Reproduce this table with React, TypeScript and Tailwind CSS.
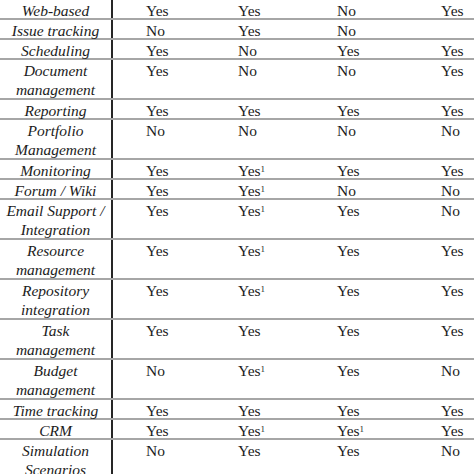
type Cell = string;

const rows: { label: string[]; values: Cell[] }[] = [
  { label: ["Web-based"], values: ["Yes", "Yes", "No", "Yes"] },
  { label: ["Issue tracking"], values: ["No", "Yes", "No", ""] },
  { label: ["Scheduling"], values: ["Yes", "No", "Yes", "Yes"] },
  { label: ["Document", "management"], values: ["Yes", "No", "No", "Yes"] },
  { label: ["Reporting"], values: ["Yes", "Yes", "Yes", "Yes"] },
  { label: ["Portfolio", "Management"], values: ["No", "No", "No", "No"] },
  { label: ["Monitoring"], values: ["Yes", "Yes1", "Yes", "Yes"] },
  { label: ["Forum / Wiki"], values: ["Yes", "Yes1", "No", "No"] },
  { label: ["Email Support /", "Integration"], values: ["Yes", "Yes1", "Yes", "No"] },
  { label: ["Resource", "management"], values: ["Yes", "Yes1", "Yes", "Yes"] },
  { label: ["Repository", "integration"], values: ["Yes", "Yes1", "Yes", "Yes"] },
  { label: ["Task", "management"], values: ["Yes", "Yes", "Yes", "Yes"] },
  { label: ["Budget", "management"], values: ["No", "Yes1", "Yes", "No"] },
  { label: ["Time tracking"], values: ["Yes", "Yes", "Yes", "Yes"] },
  { label: ["CRM"], values: ["Yes", "Yes1", "Yes1", "Yes"] },
  { label: ["Simulation", "Scenarios"], values: ["No", "Yes", "Yes", "No"] },
];

const serif = { fontFamily: "'Liberation Serif', 'Times New Roman', serif" };

function Value({ v }: { v: Cell }) {
  if (v.endsWith("1")) {
    return (
      <span className="inline-flex items-start" style={serif}>
        {v.slice(0, -1)}
        <span className="text-[9px] leading-[12px] pt-[2px]">1</span>
      </span>
    );
  }
  return <span style={serif}>{v}</span>;
}

export default function App() {
  return (
    <div className="w-[474px] h-[474px] overflow-hidden bg-white text-[#1c1c1c]" style={serif}>
      {rows.map((row, i) => (
        <div
          key={i}
          className={`flex border-b-2 border-[#a6a6a6] ${row.label.length > 1 ? "h-[40px]" : "h-[20px]"}`}
        >
          <div className="w-[113px] shrink-0 border-r-2 border-[#262626] flex flex-col items-center italic text-[15.5px] leading-[19px] pt-[1px]">
            {row.label.map((l, j) => (
              <span key={j} className="whitespace-nowrap" style={serif}>
                {l}
              </span>
            ))}
          </div>
          <div className="w-[123px] pl-[33px] text-[15.5px] leading-[19px] pt-[1px]">
            <Value v={row.values[0]} />
          </div>
          <div className="w-[101px] pl-[2px] text-[15.5px] leading-[19px] pt-[1px]">
            <Value v={row.values[1]} />
          </div>
          <div className="w-[104px] text-[15.5px] leading-[19px] pt-[1px]">
            <Value v={row.values[2]} />
          </div>
          <div className="flex-1 text-[15.5px] leading-[19px] pt-[1px]">
            <Value v={row.values[3]} />
          </div>
        </div>
      ))}
    </div>
  );
}
